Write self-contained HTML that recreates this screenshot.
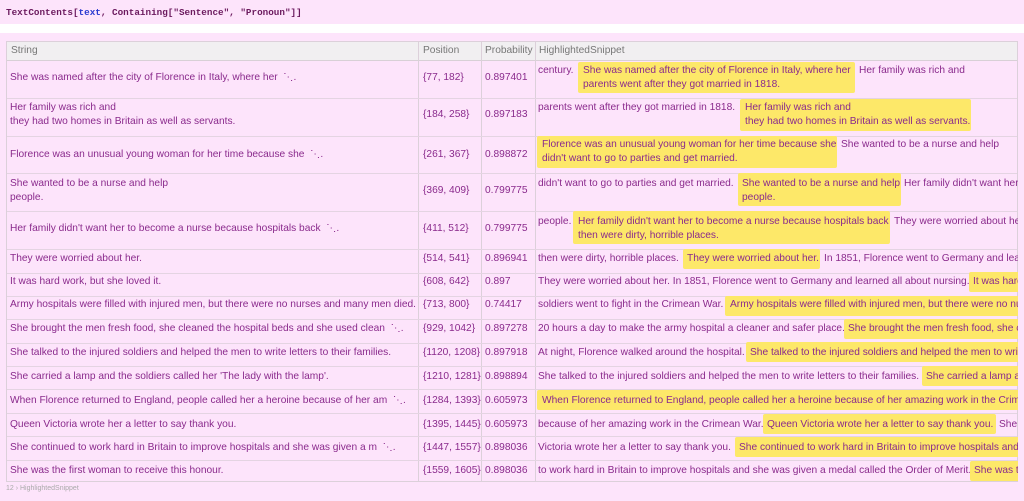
<!DOCTYPE html>
<html><head><meta charset="utf-8"><style>
body{margin:0;width:1024px;height:501px;overflow:hidden;background:#fde4fb;font-family:"Liberation Sans",sans-serif;font-size:10.2px;color:#8a2a8c;position:relative}
.top{position:absolute;left:0;top:0;width:1024px;height:24px;background:#fde4fb}
.code{position:absolute;left:6px;top:7px;font-family:"Liberation Mono",monospace;font-weight:bold;font-size:9.3px;color:#6b1a5e}
.gap{position:absolute;left:0;top:24px;width:1024px;height:9px;background:#fff}
.tbl{position:absolute;left:6px;top:41px;width:1012px;height:441px;border:1px solid #dcd0da;overflow:hidden;box-sizing:border-box}
.hdr{position:absolute;left:0;top:0;width:1012px;height:18px;background:#f1eff1;border-bottom:1px solid #d8d0d6;color:#777}
.vl{position:absolute;top:0;width:1px;height:441px;background:#dcd0da}
.hl{position:absolute;left:0;width:1012px;height:1px;background:#e4d4e2}
.t{position:absolute;white-space:nowrap;line-height:14px}
.b{position:absolute;background:#fde869;border-radius:2px}
.f{position:absolute;left:6px;top:485px;font-size:7px;color:#aaa}
</style></head><body>
<div class="top"><div class="code">TextContents[<span style="color:#2a3ad0">text</span>, Containing["Sentence", "Pronoun"]]</div></div>
<div class="gap"></div>
<div class="tbl">
<div class="hdr">
<div class="t" style="left:4px;top:2px">String</div>
<div class="t" style="left:416px;top:2px">Position</div>
<div class="t" style="left:478px;top:2px">Probability</div>
<div class="t" style="left:532px;top:2px">HighlightedSnippet</div>
</div>
<div class="vl" style="left:411px"></div><div class="vl" style="left:474px"></div><div class="vl" style="left:528px"></div>
<div class="hl" style="top:56px"></div><div class="hl" style="top:94px"></div><div class="hl" style="top:131px"></div><div class="hl" style="top:169px"></div><div class="hl" style="top:207px"></div><div class="hl" style="top:231px"></div><div class="hl" style="top:254px"></div><div class="hl" style="top:277px"></div><div class="hl" style="top:301px"></div><div class="hl" style="top:324px"></div><div class="hl" style="top:347px"></div><div class="hl" style="top:371px"></div><div class="hl" style="top:394px"></div><div class="hl" style="top:418px"></div>
</div>
<div style="position:absolute;left:0;top:1px;width:1018px;height:481px;overflow:hidden">
<div class="t" style="left:10px;top:70px">She was named after the city of Florence in Italy, where her &nbsp;⋱.</div>
<div class="t" style="left:10px;top:100px">Her family was rich and<br>they had two homes in Britain as well as servants.</div>
<div class="t" style="left:10px;top:147px">Florence was an unusual young woman for her time because she &nbsp;⋱.</div>
<div class="t" style="left:10px;top:176px">She wanted to be a nurse and help<br>people.</div>
<div class="t" style="left:10px;top:221px">Her family didn't want her to become a nurse because hospitals back &nbsp;⋱.</div>
<div class="t" style="left:10px;top:251px">They were worried about her.</div>
<div class="t" style="left:10px;top:274px">It was hard work, but she loved it.</div>
<div class="t" style="left:10px;top:297px">Army hospitals were filled with injured men, but there were no nurses and many men died.</div>
<div class="t" style="left:10px;top:321px">She brought the men fresh food, she cleaned the hospital beds and she used clean &nbsp;⋱.</div>
<div class="t" style="left:10px;top:345px">She talked to the injured soldiers and helped the men to write letters to their families.</div>
<div class="t" style="left:10px;top:369px">She carried a lamp and the soldiers called her 'The lady with the lamp'.</div>
<div class="t" style="left:10px;top:393px">When Florence returned to England, people called her a heroine because of her am &nbsp;⋱.</div>
<div class="t" style="left:10px;top:417px">Queen Victoria wrote her a letter to say thank you.</div>
<div class="t" style="left:10px;top:440px">She continued to work hard in Britain to improve hospitals and she was given a m &nbsp;⋱.</div>
<div class="t" style="left:10px;top:463px">She was the first woman to receive this honour.</div>

<div class="t" style="left:423px;top:70px">{77, 182}</div><div class="t" style="left:485px;top:70px">0.897401</div>
<div class="t" style="left:423px;top:107px">{184, 258}</div><div class="t" style="left:485px;top:107px">0.897183</div>
<div class="t" style="left:423px;top:147px">{261, 367}</div><div class="t" style="left:485px;top:147px">0.898872</div>
<div class="t" style="left:423px;top:183px">{369, 409}</div><div class="t" style="left:485px;top:183px">0.799775</div>
<div class="t" style="left:423px;top:221px">{411, 512}</div><div class="t" style="left:485px;top:221px">0.799775</div>
<div class="t" style="left:423px;top:251px">{514, 541}</div><div class="t" style="left:485px;top:251px">0.896941</div>
<div class="t" style="left:423px;top:274px">{608, 642}</div><div class="t" style="left:485px;top:274px">0.897</div>
<div class="t" style="left:423px;top:297px">{713, 800}</div><div class="t" style="left:485px;top:297px">0.74417</div>
<div class="t" style="left:423px;top:321px">{929, 1042}</div><div class="t" style="left:485px;top:321px">0.897278</div>
<div class="t" style="left:423px;top:345px">{1120, 1208}</div><div class="t" style="left:485px;top:345px">0.897918</div>
<div class="t" style="left:423px;top:369px">{1210, 1281}</div><div class="t" style="left:485px;top:369px">0.898894</div>
<div class="t" style="left:423px;top:393px">{1284, 1393}</div><div class="t" style="left:485px;top:393px">0.605973</div>
<div class="t" style="left:423px;top:417px">{1395, 1445}</div><div class="t" style="left:485px;top:417px">0.605973</div>
<div class="t" style="left:423px;top:440px">{1447, 1557}</div><div class="t" style="left:485px;top:440px">0.898036</div>
<div class="t" style="left:423px;top:463px">{1559, 1605}</div><div class="t" style="left:485px;top:463px">0.898036</div>

<div class="t" style="left:538px;top:63px">century.</div>
<div class="b" style="left:578px;top:61px;width:277px;height:31px"></div><div class="t" style="left:583px;top:63px">She was named after the city of Florence in Italy, where her<br>parents went after they got married in 1818.</div>
<div class="t" style="left:859px;top:63px">Her family was rich and</div>

<div class="t" style="left:538px;top:100px">parents went after they got married in 1818.</div>
<div class="b" style="left:740px;top:98px;width:231px;height:32px"></div><div class="t" style="left:745px;top:100px">Her family was rich and<br>they had two homes in Britain as well as servants.</div>

<div class="b" style="left:537px;top:135px;width:300px;height:32px"></div><div class="t" style="left:542px;top:137px">Florence was an unusual young woman for her time because she<br>didn't want to go to parties and get married.</div>
<div class="t" style="left:841px;top:137px">She wanted to be a nurse and help</div>

<div class="t" style="left:538px;top:176px">didn't want to go to parties and get married.</div>
<div class="b" style="left:738px;top:172px;width:163px;height:33px"></div><div class="t" style="left:742px;top:176px">She wanted to be a nurse and help<br>people.</div>
<div class="t" style="left:904px;top:176px">Her family didn't want her</div>

<div class="t" style="left:538px;top:214px">people.</div>
<div class="b" style="left:573px;top:210px;width:317px;height:33px"></div><div class="t" style="left:578px;top:214px">Her family didn't want her to become a nurse because hospitals back<br>then were dirty, horrible places.</div>
<div class="t" style="left:894px;top:214px">They were worried about her</div>

<div class="t" style="left:538px;top:251px">then were dirty, horrible places.</div>
<div class="b" style="left:683px;top:248px;width:137px;height:20px"></div><div class="t" style="left:687px;top:251px">They were worried about her.</div>
<div class="t" style="left:824px;top:251px">In 1851, Florence went to Germany and learned</div>

<div class="t" style="left:538px;top:274px">They were worried about her. In 1851, Florence went to Germany and learned all about nursing.</div>
<div class="b" style="left:969px;top:271px;width:60px;height:20px"></div><div class="t" style="left:973px;top:274px">It was hard work</div>

<div class="t" style="left:538px;top:297px">soldiers went to fight in the Crimean War.</div>
<div class="b" style="left:725px;top:295px;width:300px;height:20px"></div><div class="t" style="left:730px;top:297px">Army hospitals were filled with injured men, but there were no nurses</div>

<div class="t" style="left:538px;top:321px">20 hours a day to make the army hospital a cleaner and safer place.</div>
<div class="b" style="left:844px;top:318px;width:180px;height:20px"></div><div class="t" style="left:848px;top:321px">She brought the men fresh food, she cleaned</div>

<div class="t" style="left:538px;top:345px">At night, Florence walked around the hospital.</div>
<div class="b" style="left:746px;top:341px;width:280px;height:20px"></div><div class="t" style="left:750px;top:345px">She talked to the injured soldiers and helped the men to write</div>

<div class="t" style="left:538px;top:369px">She talked to the injured soldiers and helped the men to write letters to their families.</div>
<div class="b" style="left:922px;top:365px;width:100px;height:20px"></div><div class="t" style="left:926px;top:369px">She carried a lamp and</div>

<div class="b" style="left:537px;top:389px;width:490px;height:20px"></div><div class="t" style="left:542px;top:393px">When Florence returned to England, people called her a heroine because of her amazing work in the Crimean War.</div>

<div class="t" style="left:538px;top:417px">because of her amazing work in the Crimean War.</div>
<div class="b" style="left:763px;top:413px;width:233px;height:20px"></div><div class="t" style="left:767px;top:417px">Queen Victoria wrote her a letter to say thank you.</div>
<div class="t" style="left:999px;top:417px">She</div>

<div class="t" style="left:538px;top:440px">Victoria wrote her a letter to say thank you.</div>
<div class="b" style="left:735px;top:436px;width:290px;height:20px"></div><div class="t" style="left:739px;top:440px">She continued to work hard in Britain to improve hospitals and</div>

<div class="t" style="left:538px;top:463px">to work hard in Britain to improve hospitals and she was given a medal called the Order of Merit.</div>
<div class="b" style="left:970px;top:460px;width:60px;height:20px"></div><div class="t" style="left:974px;top:463px">She was the first</div>
</div>
<div class="f">12 › HighlightedSnippet</div>
</body></html>
